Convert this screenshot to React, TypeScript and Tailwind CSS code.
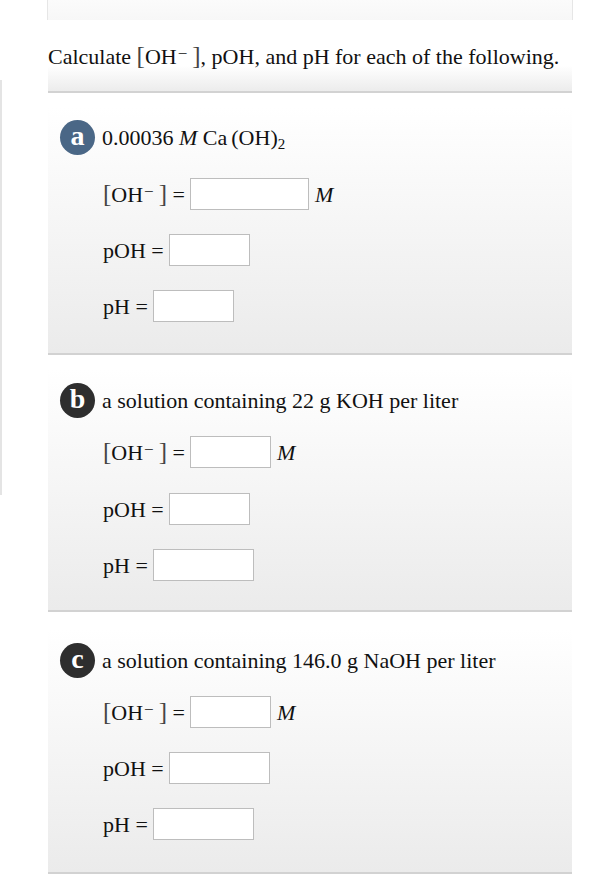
import React from "react";

const serif = { fontFamily: '"Liberation Serif", "Times New Roman", serif' };

function OH() {
  return (
    <span className="inline-flex items-baseline">
      <span className="text-[25px] font-light text-[#444] leading-none">[</span>
      <span>OH</span>
      <sup className="ml-[1px] text-[17px] relative -top-[5px]">−</sup>
      <span className="ml-[5px] text-[25px] font-light text-[#444] leading-none">]</span>
    </span>
  );
}

function Box({ w }: { w: string }) {
  return <div className={`h-[32px] ${w} bg-white border border-[#bdbdbd]`} />;
}

function Row({
  label,
  w,
  unit,
  mt,
}: {
  label: React.ReactNode;
  w: string;
  unit?: boolean;
  mt: string;
}) {
  return (
    <div className={`flex items-center h-[32px] pl-[55px] ${mt}`}>
      <span className="mr-[5px] whitespace-nowrap">{label}</span>
      <Box w={w} />
      {unit && <span className="ml-[6px] italic">M</span>}
    </div>
  );
}

function Badge({ letter, color }: { letter: string; color: string }) {
  return (
    <div
      className={`w-[35px] h-[35px] rounded-full ${color} text-white flex items-center justify-center text-[28px] font-bold shrink-0 leading-none pb-[3px]`}
    >
      {letter}
    </div>
  );
}

export default function App() {
  return (
    <div className="flex bg-white min-h-[884px] text-[#111] text-[22px]" style={serif}>
      {/* stray left edge */}
      <div className="w-[2px] mt-[80px] h-[415px] bg-[#e4e4e4] shrink-0" />

      <div className="ml-[46px] w-[524px] flex flex-col">
        <div className="h-[20px] border-x border-[#e6e6e6] bg-gradient-to-b from-[#fbfbfb] to-[#f7f7f7] -ml-[1px] w-[526px]" />

        {/* title */}
        <div className="mt-[20px] h-[53px] pt-[3px] bg-gradient-to-b from-white via-white to-[#ececec] border-b-2 border-[#d2d2d2] leading-[26px]">
          <span>
            Calculate <OH />, pOH, and pH for each of the following.
          </span>
        </div>

        {/* a */}
        <div className="mt-[14px] pt-[13px] pb-[31px] bg-gradient-to-b from-white to-[#ebebeb] border-b-2 border-[#d2d2d2]">
          <div className="flex items-center pl-[12px] gap-[7px] h-[35px]">
            <Badge letter="a" color="bg-[#4a6786]" />
            <span>
              0.00036 <i>M</i> Ca<span className="ml-[4px]">(OH)</span>
              <sub className="text-[15px]">2</sub>
            </span>
          </div>
          <Row label={<><OH /> =</>} w="w-[119px]" unit mt="mt-[23px]" />
          <Row label="pOH =" w="w-[81px]" mt="mt-[24px]" />
          <Row label="pH =" w="w-[81px]" mt="mt-[24px]" />
        </div>

        {/* b */}
        <div className="mt-[14px] pt-[14px] pb-[29px] bg-gradient-to-b from-white to-[#ebebeb] border-b-2 border-[#d2d2d2]">
          <div className="flex items-center pl-[12px] gap-[7px] h-[35px]">
            <Badge letter="b" color="bg-[#2e2e2e]" />
            <span>a solution containing 22 g KOH per liter</span>
          </div>
          <Row label={<><OH /> =</>} w="w-[81px]" unit mt="mt-[18px]" />
          <Row label="pOH =" w="w-[81px]" mt="mt-[25px]" />
          <Row label="pH =" w="w-[101px]" mt="mt-[24px]" />
        </div>

        {/* c */}
        <div className="mt-[17px] pt-[14px] pb-[32px] bg-gradient-to-b from-white to-[#ebebeb] border-b-2 border-[#d2d2d2]">
          <div className="flex items-center pl-[12px] gap-[7px] h-[35px]">
            <Badge letter="c" color="bg-[#2e2e2e]" />
            <span>a solution containing 146.0 g NaOH per liter</span>
          </div>
          <Row label={<><OH /> =</>} w="w-[81px]" unit mt="mt-[18px]" />
          <Row label="pOH =" w="w-[101px]" mt="mt-[24px]" />
          <Row label="pH =" w="w-[101px]" mt="mt-[24px]" />
        </div>
      </div>
    </div>
  );
}
